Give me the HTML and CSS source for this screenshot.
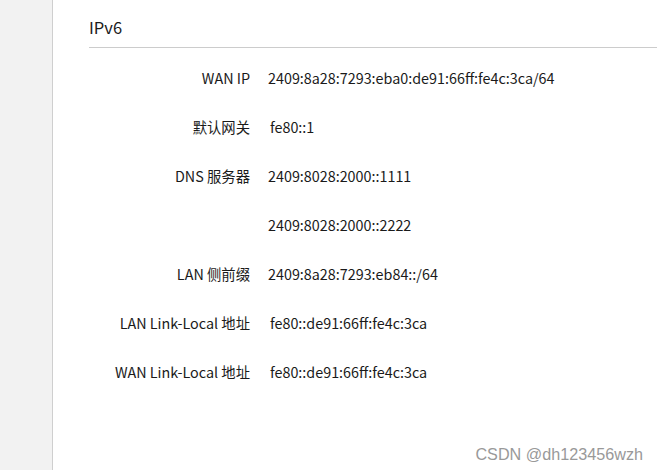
FILE: index.html
```html
<!DOCTYPE html>
<html>
<head>
<meta charset="utf-8">
<link rel="stylesheet" href="styles.css">
</head>
<body>
<div class="page">
  <aside class="side"></aside>
  <main class="main">
    <h2 class="title">IPv6</h2>
    <div class="rows">
      <div class="row"><span class="label">WAN IP</span><span class="value">2409:8a28:7293:eba0:de91:66ff:fe4c:3ca/64</span></div>
      <div class="row"><span class="label">默认网关</span><span class="value fe">fe80::1</span></div>
      <div class="row"><span class="label">DNS 服务器</span><span class="value">2409:8028:2000::1111</span></div>
      <div class="row"><span class="label"></span><span class="value">2409:8028:2000::2222</span></div>
      <div class="row"><span class="label">LAN 侧前缀</span><span class="value">2409:8a28:7293:eb84::/64</span></div>
      <div class="row"><span class="label">LAN Link-Local 地址</span><span class="value fe">fe80::de91:66ff:fe4c:3ca</span></div>
      <div class="row"><span class="label">WAN Link-Local 地址</span><span class="value fe">fe80::de91:66ff:fe4c:3ca</span></div>
    </div>
  </main>
  <div class="watermark">CSDN @dh123456wzh</div>
</div>
</body>
</html>
```
FILE: styles.css
```css
html, body {
  margin: 0;
  padding: 0;
  background: #fff;
}
.page {
  position: relative;
  display: flex;
  width: 657px;
  height: 470px;
  overflow: hidden;
  font-family: "Noto Sans CJK SC", "Noto Sans", sans-serif;
  color: #1a1a1a;
}
.side {
  width: 52px;
  flex: none;
  background: #f2f2f2;
  border-right: 1px solid #cfcfcf;
}
.main {
  flex: 1;
  padding-left: 36px;
}
.title {
  margin: 0;
  box-sizing: border-box;
  height: 48px;
  padding-top: 16px;
  font-size: 16.5px;
  font-weight: normal;
  line-height: 22px;
  border-bottom: 1px solid #cccccc;
}
.rows {
  display: flex;
  flex-direction: column;
  padding-top: 5px;
}
.row {
  display: flex;
  align-items: center;
  height: 49px;
  font-size: 14.35px;
  line-height: 20px;
}
.label {
  width: 161px;
  text-align: right;
  flex: none;
}
.value {
  margin-left: 18px;
}
.value.fe {
  margin-left: 20px;
}
.watermark {
  position: absolute;
  right: 14px;
  bottom: 6px;
  font-family: "Liberation Sans", Arial, sans-serif;
  font-size: 16.2px;
  color: #999;
}
```
